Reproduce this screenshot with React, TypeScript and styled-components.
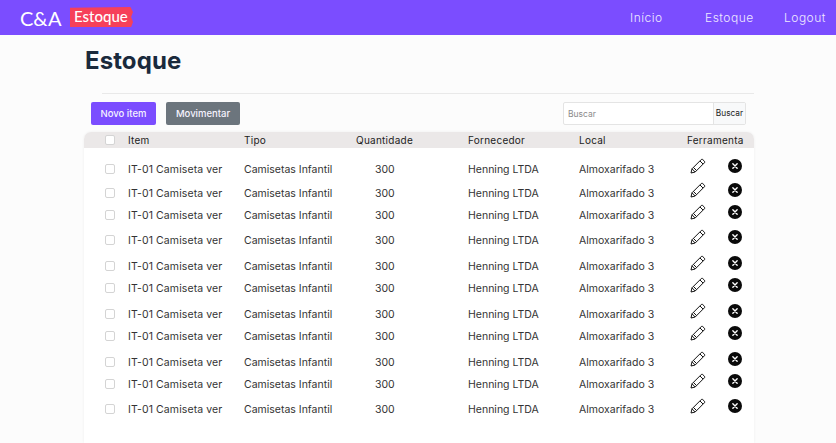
import React from "react";
import styled, { createGlobalStyle } from "styled-components";

const Global = createGlobalStyle`
  html, body { margin: 0; padding: 0; height: 443px; overflow: hidden; background: #fcfcfc; }
  * { box-sizing: border-box; }
  body { font-family: "Inter", "Liberation Sans", sans-serif; }
`;

const Header = styled.header`
  height: 35px; background: #7b4dff; display: flex; align-items: center;
  padding-left: 20px; color: #fff;
`;
const Logo = styled.div`
  font-family: "Lato", sans-serif; font-size: 20px; font-weight: 400; width: 50px;
`;
const Badge = styled.div`
  background: #f6405a; height: 20px; width: 63px; font-family: "Lato", sans-serif; font-size: 15px; font-weight: 500;
  line-height: 19px; padding-left: 4px; margin-top: -1px;
  clip-path: polygon(0 4%, 96% 0, 100% 25%, 97% 50%, 100% 75%, 97% 100%, 0 100%);
`;
const Nav = styled.nav`
  margin-left: auto; display: flex; font-size: 12px; font-weight: 300; color: #efe9ff; letter-spacing: .5px; margin-top: -1px;
`;
const NavLink = styled.span<{ $w: number }>` width: ${p => p.$w}px; `;

const Main = styled.main` width: 670px; margin-left: 84px; `;
const Title = styled.h1`
  margin: 0; padding: 12px 0 0 1px; height: 58px; font-size: 24px; line-height: 28px; font-weight: 700; color: #1a2a3c; letter-spacing: .1px;
`;
const Divider = styled.hr`
  margin: 0 0 0 18px; width: 652px; border: 0; height: 1px; background: #e9e9e9;
`;
const Toolbar = styled.div`
  display: flex; align-items: flex-start; padding: 8px 8px 0 7px; height: 38px;
`;
const Button = styled.button<{ $bg: string; $w: number; $ml?: number }>`
  background: ${p => p.$bg}; color: #f6f3ff; border: 0; border-radius: 2px; height: 23px; width: ${p => p.$w}px;
  margin-left: ${p => p.$ml ?? 0}px; font: 500 9.5px "Inter", sans-serif; padding: 0;
`;
const Search = styled.div`
  margin-left: auto; display: flex; height: 23px; width: 183px; border: 1px solid #e4e4e4; border-radius: 2px; background: #fff;
`;
const SearchInput = styled.input`
  flex: 1; min-width: 0; border: 0; outline: 0; padding: 0 4px; background: transparent; font: 400 8.5px "Inter", sans-serif;
  &::placeholder { color: #8b8b8b; }
`;
const SearchButton = styled.div`
  width: 32px; border-left: 1px solid #e4e4e4; background: #f8f9fa; font-size: 8.3px; line-height: 21px; text-align: center; color: #222;
`;

const Panel = styled.section`
  height: 311px; background: #fff; border-radius: 7px 7px 0 0; box-shadow: 0 0 3px rgba(0,0,0,.06);
`;
const cols = "23px 116px 112px 112px 111px 108px 38px 1fr";
const HeadRow = styled.div`
  display: grid; grid-template-columns: ${cols}; align-items: center; height: 16px; padding-left: 21px;
  background: #ebe8e8; border-radius: 7px 7px 0 0; font-size: 10px; color: #222; letter-spacing: .25px;
`;
const Rows = styled.div` padding-top: 14px; `;
const Row = styled.div<{ $h: number }>`
  display: grid; grid-template-columns: ${cols}; align-items: start; height: ${p => p.$h}px; padding-left: 21px;
  font-size: 10.500px; line-height: 16px; color: #333;
`;
const Box = styled.span`
  width: 10px; height: 10px; border: 1px solid #d4d4d4; border-radius: 2px; background: #fff; display: block;
`;
const RowBox = styled(Box)` margin-top: 2px; `;
const ItemCell = styled.span` letter-spacing: .1px; `;
const QtyCell = styled.span` padding-left: 19px; `;
const NoWrap = styled.span` white-space: nowrap; `;
const IconCell = styled.span<{ $pad: number; $top: number }>`
  display: flex; padding-left: ${p => p.$pad}px; margin-top: ${p => p.$top}px;
`;

const Pencil = () => (
  <svg width="16" height="16" viewBox="0 0 16 16" fill="none" stroke="#111" strokeWidth="1">
    <path d="M1 15l1-4.200L11.300 1.500a1 1 0 0 1 1.400 0l1.800 1.800a1 1 0 0 1 0 1.400L5.200 14z" strokeLinejoin="round" />
    <path d="M10 3l3 3M2 10.800L5.200 14M3.500 9.500l3 3" />
  </svg>
);
const Close = () => (
  <svg width="14" height="14" viewBox="0 0 15 15">
    <circle cx="7.500" cy="7.500" r="7.500" fill="#0a0a0a" />
    <path d="M5.200 5.200l4.600 4.600M9.800 5.200l-4.600 4.600" stroke="#fff" strokeWidth="1.500" strokeLinecap="round" />
  </svg>
);

const heights = [24, 22, 25, 26, 22, 26, 22, 26, 22, 25, 24];

export default function App() {
  return (
    <>
      <Global />
      <Header>
        <Logo>C&amp;A</Logo>
        <Badge>Estoque</Badge>
        <Nav>
          <NavLink $w={75}>Início</NavLink>
          <NavLink $w={79}>Estoque</NavLink>
          <NavLink $w={52}>Logout</NavLink>
        </Nav>
      </Header>
      <Main>
        <Title>Estoque</Title>
        <Divider />
        <Toolbar>
          <Button $bg="#7b4dff" $w={65}>Novo item</Button>
          <Button $bg="#6c757d" $w={74} $ml={10}>Movimentar</Button>
          <Search>
            <SearchInput placeholder="Buscar" />
            <SearchButton>Buscar</SearchButton>
          </Search>
        </Toolbar>
        <Panel>
          <HeadRow>
            <Box />
            <span>Item</span>
            <span>Tipo</span>
            <span>Quantidade</span>
            <span>Fornecedor</span>
            <span>Local</span>
            <NoWrap>Ferramenta</NoWrap>
          </HeadRow>
          <Rows>
            {heights.map((h, i) => (
              <Row key={i} $h={h}>
                <RowBox />
                <ItemCell>IT-01 Camiseta ver</ItemCell>
                <span>Camisetas Infantil</span>
                <QtyCell>300</QtyCell>
                <span>Henning LTDA</span>
                <span>Almoxarifado 3</span>
                <IconCell $pad={3} $top={-4}><Pencil /></IconCell>
                <IconCell $pad={3} $top={-3}><Close /></IconCell>
              </Row>
            ))}
          </Rows>
        </Panel>
      </Main>
    </>
  );
}
